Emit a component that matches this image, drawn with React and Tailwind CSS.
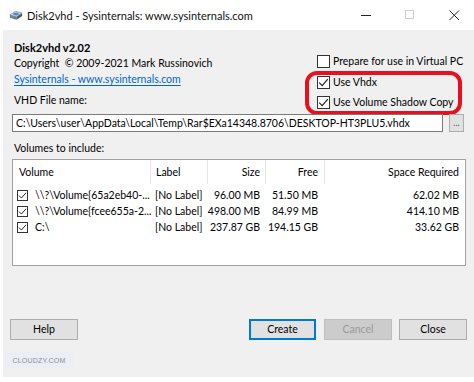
import React from "react";

const Check = ({ checked, small }) => (
  <span
    className={
      (small ? "w-[11px] h-[11px]" : "w-[13px] h-[13px]") +
      " shrink-0 border border-[#333333] bg-white flex items-center justify-center"
    }
  >
    {checked && (
      <svg width={small ? 9 : 11} height={small ? 9 : 11} viewBox="0 0 11 11">
        <path d="M1.2 5.6 L4.2 8.6 L9.8 2.2" stroke="#222" strokeWidth="1.2" fill="none" />
      </svg>
    )}
  </span>
);

const rows = [
  { vol: "\\\\?\\Volume{65a2eb40-...", label: "[No Label]", size: "96.00 MB", free: "51.50 MB", req: "62.02 MB" },
  { vol: "\\\\?\\Volume{fcee655a-2...", label: "[No Label]", size: "498.00 MB", free: "84.99 MB", req: "414.10 MB" },
  { vol: "C:\\", label: "[No Label]", size: "237.87 GB", free: "194.15 GB", req: "33.62 GB" },
];

export default function App() {
  return (
    <div className="w-[474px] h-[382px] bg-white overflow-hidden font-['Lato',sans-serif] text-[10.5px] text-black leading-none whitespace-nowrap">
      {/* Title bar */}
      <div className="h-[30px] flex items-center">
        <svg className="ml-[8px] shrink-0" width="16" height="15" viewBox="0 0 17 15">
          <path d="M2 7 L8 3 L15 5 L9 9 Z" fill="#cfd6de" stroke="#7b8794" strokeWidth="0.8" />
          <path d="M2 7 L9 9 L9 12 L2 10 Z" fill="#6c7a89" />
          <path d="M9 9 L15 5 L15 8 L9 12 Z" fill="#4a5866" />
          <ellipse cx="8.5" cy="6" rx="3" ry="1.4" fill="#3d8fd6" />
          <circle cx="4" cy="9.2" r="0.7" fill="#6fd36f" />
        </svg>
        <span className="ml-[3px] text-[11px] text-[#111]">Disk2vhd - Sysinternals: www.sysinternals.com</span>
        <div className="ml-auto flex items-center">
          <svg width="11" height="11" viewBox="0 0 11 11" className="mr-[33px]">
            <path d="M0 5.5 H10" stroke="#222" strokeWidth="1" />
          </svg>
          <svg width="10" height="10" viewBox="0 0 10 10" className="mr-[34px]">
            <rect x="0.5" y="0.5" width="8" height="8" fill="none" stroke="#cfcfcf" strokeWidth="1" />
          </svg>
          <svg width="11" height="11" viewBox="0 0 11 11" className="mr-[14px]">
            <path d="M0.5 0.5 L10 10 M10 0.5 L0.5 10" stroke="#222" strokeWidth="1" />
          </svg>
        </div>
      </div>

      {/* Body */}
      <div className="ml-[3px] h-[347px] bg-[#f0f0f0] pt-[9px] flex flex-col">
        {/* Top row */}
        <div className="flex items-start">
          <div className="ml-[11px] flex flex-col">
            <div className="h-[16px] flex items-center font-bold text-[11px]">Disk2vhd v2.02</div>
            <div className="h-[16px] flex items-center">Copyright&nbsp;&nbsp;© 2009-2021 Mark Russinovich</div>
            <div className="h-[16px] flex items-center">
              <span className="text-[#0066cc] underline underline-offset-2">Sysinternals - www.sysinternals.com</span>
            </div>
            <div className="mt-[6px] h-[14px] flex items-center">VHD File name:</div>
          </div>
          <div className="ml-auto mr-[12px] w-[157px] flex flex-col mb-[-8px]">
            <div className="mt-[15px] h-[14px] pl-[12px] flex items-center gap-[3px]">
              <Check />
              <span>Prepare for use in Virtual PC</span>
            </div>
            <div className="mt-[3px] border-[4px] border-[#e8101e] rounded-[12px] pl-[8px] pb-[2px] flex flex-col gap-[6px]">
              <div className="h-[14px] flex items-center gap-[3px]">
                <Check checked />
                <span>Use Vhdx</span>
              </div>
              <div className="h-[14px] flex items-center gap-[3px]">
                <Check checked />
                <span>Use Volume Shadow Copy</span>
              </div>
            </div>
          </div>
        </div>

        {/* File name */}
        <div className="mt-[7px] flex items-center">
          <div className="ml-[9px] w-[431px] h-[18px] bg-white border border-[#7a7a7a] flex items-center pl-[3px] overflow-hidden">
            C:\Users\user\AppData\Local\Temp\Rar$EXa14348.8706\DESKTOP-HT3PLU5.vhdx
          </div>
          <div className="ml-[6px] w-[15px] h-[18px] bg-[#e1e1e1] border border-[#adadad] flex items-end justify-center pb-[4px] text-[#555] text-[9px]">
            ...
          </div>
        </div>

        <div className="mt-[9px] ml-[11px] h-[14px] flex items-center">Volumes to include:</div>

        {/* List */}
        <div className="mt-[4px] ml-[9px] w-[454px] h-[107px] bg-white border border-[#a0a0a0] flex flex-col">
          <div className="h-[24px] grid grid-cols-[137px_57px_58px_59px_1fr]">
            <div className="pl-[6px] flex items-center">Volume</div>
            <div className="pl-[5px] flex items-center border-l border-[#e5e5e5]">Label</div>
            <div className="pr-[5px] flex items-center justify-end border-l border-[#e5e5e5]">Size</div>
            <div className="pr-[6px] flex items-center justify-end border-l border-[#e5e5e5]">Free</div>
            <div className="pr-[6px] flex items-center justify-end border-l border-[#e5e5e5]">Space Required</div>
          </div>
          <div className="mt-[3px] flex flex-col">
            {rows.map((r, i) => (
              <div key={i} className="h-[16px] grid grid-cols-[137px_57px_58px_59px_1fr]">
                <div className="pl-[4px] flex items-center gap-[7px]">
                  <Check checked small />
                  <span>{r.vol}</span>
                </div>
                <div className="pl-[5px] flex items-center">{r.label}</div>
                <div className="pr-[5px] flex items-center justify-end">{r.size}</div>
                <div className="pr-[6px] flex items-center justify-end">{r.free}</div>
                <div className="pr-[6px] flex items-center justify-end">{r.req}</div>
              </div>
            ))}
          </div>
        </div>

        {/* Buttons */}
        <div className="mt-[53px] flex items-center">
          <div className="ml-[7px] w-[68px] h-[21px] bg-[#e1e1e1] border border-[#adadad] flex items-center justify-center">Help</div>
          <div className="ml-auto mr-[7px] flex items-center">
            <div className="w-[67px] h-[21px] bg-[#e1e1e1] border-2 border-[#0078d7] flex items-center justify-center">Create</div>
            <div className="ml-[8px] w-[68px] h-[21px] bg-[#cccccc] border border-[#bfbfbf] text-[#9a9a9a] flex items-center justify-center">Cancel</div>
            <div className="ml-[7px] w-[68px] h-[21px] bg-[#e1e1e1] border border-[#adadad] flex items-center justify-center">Close</div>
          </div>
        </div>

        <div className="mt-[12px] ml-[2px] w-[68px] h-[16px] bg-[#eceef6] flex items-center justify-center text-[7px] text-[#8a8c98] tracking-[0.2px] font-['Liberation_Sans',sans-serif]">
          CLOUDZY.COM
        </div>
      </div>
    </div>
  );
}
